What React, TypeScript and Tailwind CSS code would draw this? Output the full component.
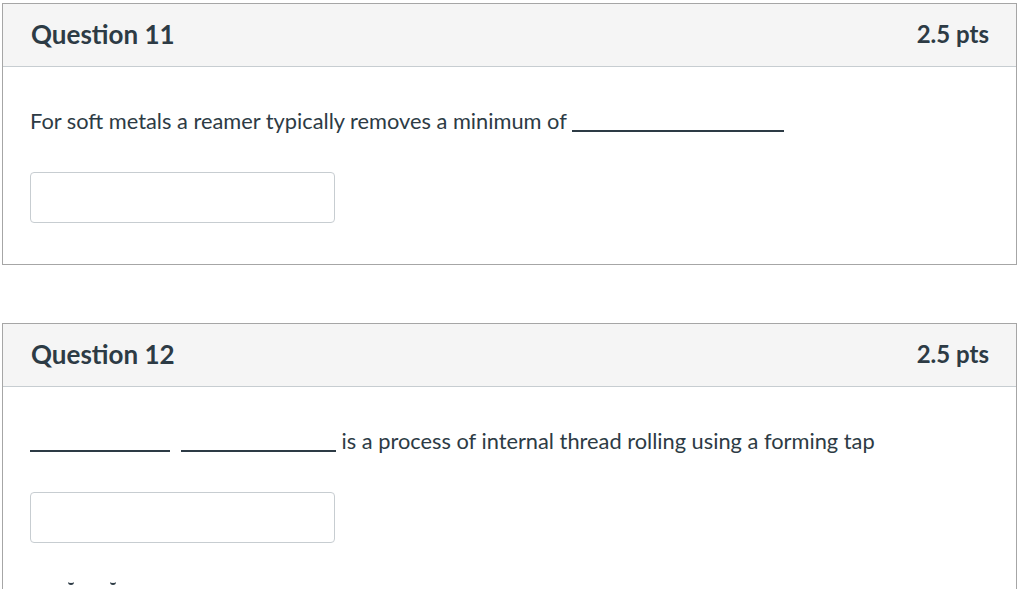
import React from "react";

const font = { fontFamily: "Lato, 'Open Sans', sans-serif" };

function Blank({ width }: { width: string }) {
  return (
    <span
      className={`inline-block ${width} border-b-2 border-[#2d3b45] align-[-3px] h-[1px]`}
    />
  );
}

function QuestionCard({
  title,
  points,
  children,
}: {
  title: string;
  points: string;
  children: React.ReactNode;
}) {
  return (
    <div className="border border-[#a6a6a6] bg-white">
      <div className="flex items-center justify-between h-[63px] pb-[3px] bg-[#f5f5f5] border-b border-[#c7cdd1] pl-[28px] pr-[27px]">
        <h2 className="text-[26px] font-bold text-[#2d3b45] leading-none">
          {title}
        </h2>
        <span className="text-[24px] font-bold text-[#2d3b45] leading-none">
          {points}
        </span>
      </div>
      <div className="px-[27px] pt-[39px]">{children}</div>
    </div>
  );
}

export default function App() {
  return (
    <div
      className="w-[1024px] h-[589px] overflow-hidden bg-white pl-[2px] pt-[3px]"
      style={font}
    >
      <div className="w-[1015px] flex flex-col gap-[58px]">
        <QuestionCard title="Question 11" points="2.5 pts">
          <p className="text-[21.8px] leading-[30px] text-[#2d3b45]">
            For soft metals a reamer typically removes a minimum of{" "}
            <Blank width="w-[212px]" />
          </p>
          <div className="mt-[36px] mb-[41px] w-[305px] h-[51px] rounded-[4px] border border-[#c7cdd1]" />
        </QuestionCard>
        <QuestionCard title="Question 12" points="2.5 pts">
          <p className="text-[21.8px] leading-[30px] text-[#2d3b45]">
            <Blank width="w-[140px]" />
            <span className="inline-block w-[11px]" />
            <Blank width="w-[155px]" /> is a process of internal thread rolling
            using a forming tap
          </p>
          <div className="mt-[36px] w-[305px] h-[51px] rounded-[4px] border border-[#c7cdd1]" />
          <div className="flex gap-[36px] pl-[38px] pt-[39px] pb-[40px]">
            <span className="inline-block w-[6px] h-[3px] rounded-b-full border-b-2 border-[#2d3b45]" />
            <span className="inline-block w-[6px] h-[3px] rounded-b-full border-b-2 border-[#2d3b45]" />
          </div>
        </QuestionCard>
      </div>
    </div>
  );
}
